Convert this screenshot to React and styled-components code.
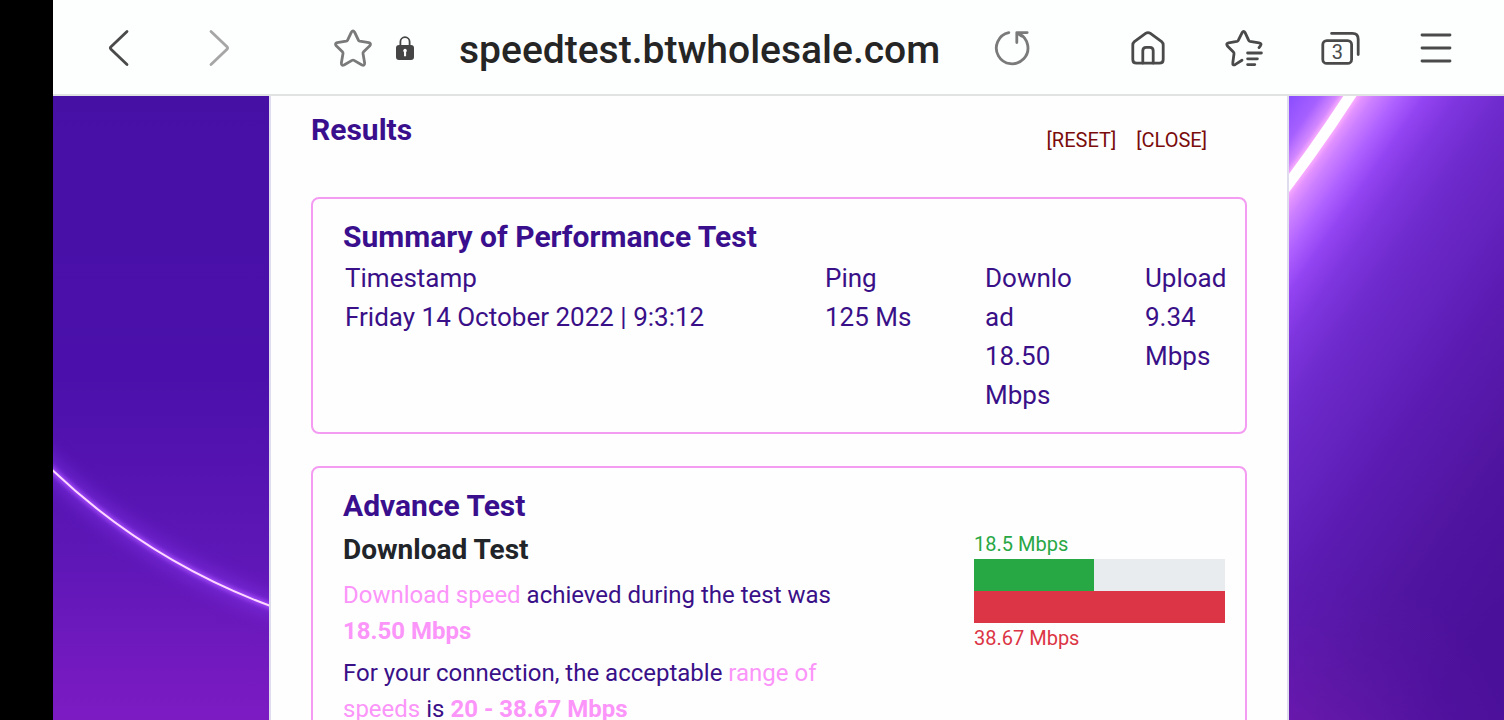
import React from "react";
import styled, { createGlobalStyle } from "styled-components";

const results = [
  { label: "Timestamp", value: "Friday 14 October 2022 | 9:3:12" },
  { label: "Ping", value: "125 Ms" },
  { label: "Download", value: "18.50 Mbps" },
  { label: "Upload", value: "9.34 Mbps" },
];

const download = { achieved: 18.5, max: 38.67 };

const BackIcon = () => (
  <Icon viewBox="0 0 48 48">
    <path d="M32 7.4 L16 22.8 Q14.8 24 16 25.2 L32 40.6" />
  </Icon>
);

const ForwardIcon = () => (
  <Icon viewBox="0 0 48 48">
    <path d="M16 7.4 L32 22.8 Q33.2 24 32 25.2 L16 40.6" />
  </Icon>
);

const StarIcon = () => (
  <Icon viewBox="0 0 48 48">
    <path d="M22.4 8.2 Q24 5.6 25.6 8.2 L29.4 16.2 Q29.8 17 30.8 17.2 L39.8 18.6 Q42.6 19.4 40.8 21.8 L34.6 27.8 Q33.8 28.6 34 29.6 L35.6 38.8 Q35.8 42 33 41 L25 36.4 Q24 35.8 23 36.4 L15 41 Q12.2 42 12.4 38.8 L14 29.6 Q14.2 28.6 13.4 27.8 L7.2 21.8 Q5.4 19.4 8.2 18.6 L17.2 17.2 Q18.2 17 18.6 16.2 Z" />
  </Icon>
);

const ReloadIcon = () => (
  <Icon viewBox="0 0 48 48">
    <path d="M20.8 8.6 A15.8 15.8 0 1 0 31 9.8" />
    <path d="M39.2 8.6 H28.8 V18.6 M29 8.8 L33.6 12" />
  </Icon>
);

const HomeIcon = () => (
  <Icon viewBox="0 0 48 48">
    <path d="M8.8 21 Q8.8 19 10.4 17.6 L21.6 9.4 Q24 7.8 26.4 9.4 L37.6 17.6 Q39.2 19 39.2 21 V35.4 Q39.2 39.2 35.4 39.2 H12.6 Q8.8 39.2 8.8 35.4 Z" />
    <path d="M18.8 39 V26.8 Q18.8 23.4 22.2 23.4 H25.8 Q29.2 23.4 29.2 26.8 V39" />
  </Icon>
);

const BookmarksIcon = () => (
  <Icon viewBox="0 0 48 48">
    <path d="M22 36.2 L15.4 40.4 Q12.4 42 12.8 38.8 L14 29.8 Q14.2 28.8 13.4 28 L7.4 22 Q5.6 19.6 8.6 18.8 L17 17.4 Q18 17.2 18.4 16.2 L22 8.8 Q23.6 6.2 25.2 8.8 L28.6 16.2 Q29 17.2 30 17.4 L39 18.8 Q42.2 19.6 40.4 21.8 L39 23.6" />
    <path d="M27.6 29 H41.4 M27.6 34.8 H37.4 M27.6 40.6 H34.8" />
  </Icon>
);

const TabsIcon = () => (
  <Icon viewBox="0 0 48 48">
    <rect x="6.8" y="16.6" width="28.8" height="22.8" rx="4" />
    <path d="M15.6 9.4 H36.4 Q42.2 9.4 42.2 15.2 V30.6" />
    <TabCount x="21.4" y="35">3</TabCount>
  </Icon>
);

const MenuIcon = () => (
  <Icon viewBox="0 0 48 48">
    <path d="M10 11 H38 M10 24 H38 M10 37 H38" />
  </Icon>
);

const LockIcon = () => (
  <LockMark viewBox="0 0 24 24" role="img" aria-label="Secure">
    <path d="M7.4 10 V5.8 A4.6 4.6 0 0 1 16.6 5.8 V10" fill="none" stroke="#454545" strokeWidth="1.8" />
    <rect x="3" y="9" width="18" height="15" rx="3" fill="#454545" />
    <path d="M10.2 14.8 a1.8 1.8 0 1 1 2.9 1.3 V20.2 H11 V16.4 Z" fill="#fff" />
  </LockMark>
);

// light trails behind the results panel
const Backdrop = () => (
  <Art viewBox="0 0 1451 624" preserveAspectRatio="xMidYMin slice" aria-hidden="true">
    <defs>
      <linearGradient id="left" x1="0" y1="0" x2="0" y2="1">
        <stop offset="0" stopColor="#4710a5" />
        <stop offset="0.45" stopColor="#4b10ab" />
        <stop offset="0.75" stopColor="#5f17b8" />
        <stop offset="1" stopColor="#7d1bc3" />
      </linearGradient>
      {/* runs at a right angle to the bright beam */}
      <linearGradient id="right" gradientUnits="userSpaceOnUse" x1="1248" y1="-34" x2="1659" y2="251">
        <stop offset="0.02" stopColor="#8a4dff" />
        <stop offset="0.07" stopColor="#a660ff" />
        <stop offset="0.104" stopColor="#dc90ff" />
        <stop offset="0.136" stopColor="#e898ff" />
        <stop offset="0.16" stopColor="#cc80ff" />
        <stop offset="0.2" stopColor="#ae60ff" />
        <stop offset="0.244" stopColor="#9344f2" />
        <stop offset="0.3" stopColor="#7e35de" />
        <stop offset="0.38" stopColor="#6e2acc" />
        <stop offset="0.594" stopColor="#5b1bb2" />
        <stop offset="0.776" stopColor="#5015a0" />
        <stop offset="0.95" stopColor="#4b109a" />
      </linearGradient>
      <radialGradient id="corner" gradientUnits="userSpaceOnUse" cx="1200" cy="720" r="280">
        <stop offset="0" stopColor="#8a1cb8" stopOpacity="0.9" />
        <stop offset="1" stopColor="#5a17a8" stopOpacity="0" />
      </radialGradient>
      <filter id="glow" x="-50%" y="-50%" width="200%" height="200%" colorInterpolationFilters="sRGB">
        <feGaussianBlur stdDeviation="9" />
      </filter>
      <filter id="soft" x="-50%" y="-50%" width="200%" height="200%" colorInterpolationFilters="sRGB">
        <feGaussianBlur stdDeviation="2" />
      </filter>
    </defs>
    <rect width="726" height="624" fill="url(#left)" />
    <rect x="725" width="726" height="624" fill="url(#right)" />
    <rect x="725" width="726" height="624" fill="url(#corner)" />
    <g fill="none">
      <path d="M-20 355 Q90 468 240 518" stroke="#8a3af0" strokeWidth="18" opacity="0.5" filter="url(#glow)" />
      <path d="M-20 355 Q90 468 240 518" stroke="#a84dff" strokeWidth="6" opacity="0.9" filter="url(#soft)" />
      <path d="M-20 355 Q90 468 240 518" stroke="#ffd9ff" strokeWidth="2" />
      <path d="M1180 156 Q1264 60 1340 -70" stroke="#ffb4ff" strokeWidth="14" filter="url(#soft)" />
      <path d="M1180 156 Q1264 60 1340 -70" stroke="#fff" strokeWidth="11" />
    </g>
  </Art>
);

const App = () => {
  return (
    <Screen>
      <GlobalStyle />
      <Cutout />
      <Browser>
        <Toolbar>
          <NavButton aria-label="Back"><BackIcon /></NavButton>
          <NavButton aria-label="Forward" $tone="#a6a6a6"><ForwardIcon /></NavButton>
          <AddressBar>
            <AddressButton aria-label="Add to bookmarks" $tone="#7a7a7a"><StarIcon /></AddressButton>
            <LockIcon />
            <Address type="text" aria-label="Address" defaultValue="speedtest.btwholesale.com" />
            <AddressButton aria-label="Reload" $tone="#7a7a7a"><ReloadIcon /></AddressButton>
          </AddressBar>
          <ToolButton aria-label="Home"><HomeIcon /></ToolButton>
          <ToolButton aria-label="Bookmarks"><BookmarksIcon /></ToolButton>
          <ToolButton aria-label="Tabs"><TabsIcon /></ToolButton>
          <ToolButton aria-label="Menu"><MenuIcon /></ToolButton>
        </Toolbar>
        <Page>
          <Backdrop />
          <Panel>
            <PanelHeader>
              <Title>Results</Title>
              <Actions>
                <ActionLink href="#reset">[RESET]</ActionLink>
                <ActionLink href="#close">[CLOSE]</ActionLink>
              </Actions>
            </PanelHeader>
            <Card>
              <Title>Summary of Performance Test</Title>
              <Summary>
                {results.map(({ label, value }) => (
                  <div key={label}>
                    <dt>{label}</dt>
                    <dd>{value}</dd>
                  </div>
                ))}
              </Summary>
            </Card>
            <Card>
              <Title>Advance Test</Title>
              <TestRow>
                <div>
                  <Subtitle>Download Test</Subtitle>
                  <Text>
                    <em>Download speed</em> achieved during the test was <strong>18.50 Mbps</strong>
                  </Text>
                  <Text>
                    For your connection, the acceptable <em>range of speeds</em> is{" "}
                    <strong>20 - 38.67 Mbps</strong>
                  </Text>
                </div>
                <div>
                  <BarLabel $color="#28a745">{download.achieved} Mbps</BarLabel>
                  <Track>
                    <Bar $color="#28a745" style={{ width: `${(download.achieved / download.max) * 100}%` }} />
                  </Track>
                  <Track>
                    <Bar $color="#dc3545" style={{ width: "100%" }} />
                  </Track>
                  <BarLabel $color="#dc3545">{download.max} Mbps</BarLabel>
                </div>
              </TestRow>
            </Card>
          </Panel>
        </Page>
      </Browser>
    </Screen>
  );
};

const GlobalStyle = createGlobalStyle`
  * {
    box-sizing: border-box;
  }
  body {
    margin: 0;
    font-family: Roboto, "Liberation Sans", sans-serif;
    color: #3a1088;
  }
  h2, h3, p, dl, dd {
    margin: 0;
  }
`;

const Screen = styled.div`
  display: flex;
  height: 100vh;
  overflow: hidden;
  background-color: #000;
`;

const Cutout = styled.div`
  flex: 0 0 53px;
`;

const Browser = styled.div`
  flex: 1;
  min-width: 0;
  display: flex;
  flex-direction: column;
`;

const Toolbar = styled.header`
  display: flex;
  align-items: center;
  height: 96px;
  flex-shrink: 0;
  padding: 2px 20px 0 16px;
  background-color: #fdfefe;
  border-bottom: 2px solid #e1e3e3;
`;

const ToolButton = styled.button`
  display: flex;
  align-items: center;
  justify-content: center;
  width: 96px;
  height: 80px;
  padding: 0;
  border: none;
  background: none;
  color: ${({ $tone }) => $tone || "#4a4a4a"};
  cursor: pointer;
`;

const NavButton = styled(ToolButton)`
  width: 100px;
`;

const AddressButton = styled(ToolButton)`
  width: 48px;
`;

const Icon = styled.svg`
  width: 48px;
  height: 48px;
  fill: none;
  stroke: currentColor;
  stroke-width: 2.8;
  stroke-linecap: round;
  stroke-linejoin: round;
`;

const TabCount = styled.text`
  font-family: Roboto, sans-serif;
  font-size: 20px;
  font-weight: 400;
  text-anchor: middle;
  fill: currentColor;
  stroke: none;
`;

const LockMark = styled.svg`
  flex-shrink: 0;
  width: 24px;
  height: 24px;
  margin: 0 40px 0 16px;
`;

const AddressBar = styled.div`
  flex: 1;
  min-width: 0;
  display: flex;
  align-items: center;
  padding: 0 64px 0 60px;
`;

const Address = styled.input`
  flex: 1;
  min-width: 0;
  height: 60px;
  padding: 4px 0 0 2px;
  border: none;
  outline: none;
  background: none;
  font-family: Roboto, "Liberation Sans", sans-serif;
  font-size: 39px;
  font-weight: 500;
  color: #252525;
`;

const Page = styled.main`
  position: relative;
  flex: 1;
  min-height: 0;
  overflow: hidden;
  padding-left: 1px;
  background-color: #4b10ab;
`;

const Art = styled.svg`
  position: absolute;
  inset: 0;
  width: 100%;
  height: 100%;
`;

const Panel = styled.div`
  position: relative;
  max-width: 1020px;
  min-height: 100%;
  margin: 0 auto;
  padding: 16px 40px;
  background-color: #fefefe;
  border: solid #dfdcee;
  border-width: 0 2px;
`;

const PanelHeader = styled.div`
  display: flex;
  justify-content: space-between;
  height: 85px;
`;

const Title = styled.h2`
  font-size: 30px;
  font-weight: 700;
  line-height: 36px;
  color: #3a0f8e;
`;

const Subtitle = styled.h3`
  padding: 4px 0 10px;
  font-size: 28px;
  font-weight: 700;
  line-height: 34px;
  color: #212529;
`;

const Actions = styled.nav`
  display: flex;
  gap: 20px;
  padding: 13px 40px 0 0;
`;

const ActionLink = styled.a`
  font-size: 20px;
  line-height: 30px;
  color: #7a0c0c;
  text-decoration: none;
`;

const Card = styled.section`
  margin-bottom: 32px;
  padding: 20px 20px 17px 30px;
  border: 2px solid #f49bf2;
  border-radius: 8px;
`;

const Summary = styled.dl`
  display: grid;
  grid-template-columns: 1fr 96px 96px 82px;
  gap: 64px;
  margin: 4px -2px 0 2px;
  font-size: 26px;
  line-height: 39px;
  overflow-wrap: break-word;
`;

const TestRow = styled.div`
  display: grid;
  grid-template-columns: 1fr 251px;
  gap: 96px;
  margin-top: 5px;
`;

const Text = styled.p`
  margin-bottom: 6px;
  font-size: 24px;
  line-height: 36px;
  em {
    font-style: normal;
    color: #fb95f9;
  }
  strong {
    font-weight: 700;
    color: #fb95f9;
  }
`;

const BarLabel = styled.p`
  font-size: 20px;
  line-height: 30px;
  color: ${({ $color }) => $color};
`;

const Track = styled.div`
  height: 32px;
  background-color: #e9ecef;
`;

const Bar = styled.div`
  height: 100%;
  background-color: ${({ $color }) => $color};
`;

export default App;
